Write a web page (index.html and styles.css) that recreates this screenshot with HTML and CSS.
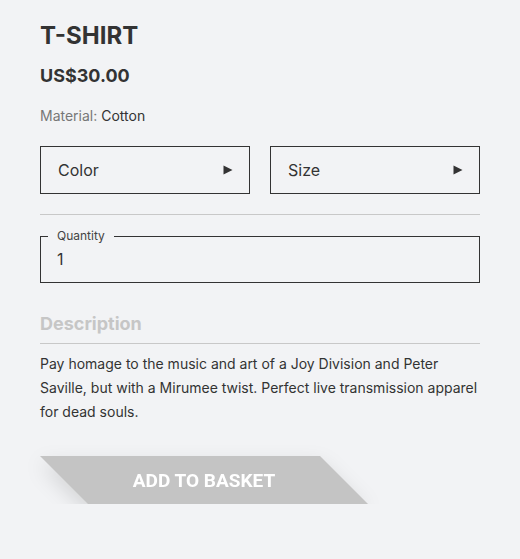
FILE: index.html
```html
<!DOCTYPE html>
<html lang="en">
<head>
<meta charset="utf-8">
<title>T-Shirt</title>
<link rel="stylesheet" href="styles.css">
</head>
<body>
<main class="product">
  <h1 class="title">T-SHIRT</h1>
  <div class="price">US$30.00</div>
  <div class="material"><span class="label">Material:</span> Cotton</div>
  <div class="selects">
    <div class="select"><span>Color</span><svg class="arrow" width="10" height="10" viewBox="0 0 10 10"><polygon points="0.5,0.5 9.5,5 0.5,9.5" fill="#333"/></svg></div>
    <div class="select"><span>Size</span><svg class="arrow" width="10" height="10" viewBox="0 0 10 10"><polygon points="0.5,0.5 9.5,5 0.5,9.5" fill="#333"/></svg></div>
  </div>
  <hr class="divider">
  <fieldset class="qty">
    <legend>Quantity</legend>
    <div class="qty-value">1</div>
  </fieldset>
  <h2 class="desc-title">Description</h2>
  <p class="desc">Pay homage to the music and art of a Joy Division and Peter Saville, but with a Mirumee twist. Perfect live transmission apparel for dead souls.</p>
  <div class="btn-wrap">
    <button class="btn">ADD TO BASKET</button>
  </div>
</main>
</body>
</html>
```
FILE: styles.css
```css
html, body {
  margin: 0;
  padding: 0;
  background: #f2f3f5;
}
body {
  font-family: Inter, "Noto Sans", sans-serif;
  color: #333;
}
.product {
  padding: 21px 40px 0 40px;
  width: 440px;
  display: flex;
  flex-direction: column;
}
.title {
  margin: 0;
  font-size: 24px;
  line-height: 30px;
  font-weight: 700;
  color: #333;
}
.price {
  margin-top: 13px;
  font-size: 18px;
  line-height: 24px;
  font-weight: 700;
}
.material {
  margin-top: 18px;
  font-size: 14px;
  line-height: 20px;
}
.material .label {
  color: #777;
}
.selects {
  margin-top: 20px;
  display: grid;
  grid-template-columns: 1fr 1fr;
  gap: 20px;
}
.select {
  border: 1px solid #333;
  padding: 11px 16px 11px 17px;
  font-size: 16px;
  line-height: 24px;
  display: flex;
  align-items: center;
  justify-content: space-between;
}
.arrow {
  display: block;
}
.divider {
  margin: 20px 0 0 0;
  border: 0;
  height: 1px;
  background: #c8c8c8;
}
.qty {
  margin: 14px 0 0 0;
  border: 1px solid #333;
  padding: 4px 16px 11px 16px;
  min-width: 0;
}
.qty legend {
  margin-left: -9px;
  padding: 0 9px;
  font-size: 12px;
  line-height: 14px;
  color: #444;
}
.qty-value {
  font-size: 16px;
  line-height: 24px;
}
.desc-title {
  margin: 29px 0 0 0;
  font-size: 18px;
  line-height: 24px;
  font-weight: 700;
  color: #c6c6c6;
  padding-bottom: 7px;
  border-bottom: 1px solid #c8c8c8;
}
.desc {
  margin: 8px 0 0 0;
  font-size: 14px;
  line-height: 24px;
  color: #333;
}
.btn-wrap {
  margin-top: 32px;
  align-self: flex-start;
  filter: drop-shadow(0 8px 10px rgba(0, 0, 0, 0.12));
}
.btn {
  display: block;
  width: 328px;
  height: 48px;
  border: 0;
  padding: 0;
  background: #c4c4c4;
  color: #fff;
  font-family: Roboto, "Liberation Sans", sans-serif;
  font-weight: 700;
  font-size: 19px;
  clip-path: polygon(0 0, 280px 0, 100% 100%, 48px 100%);
  cursor: pointer;
}
```
